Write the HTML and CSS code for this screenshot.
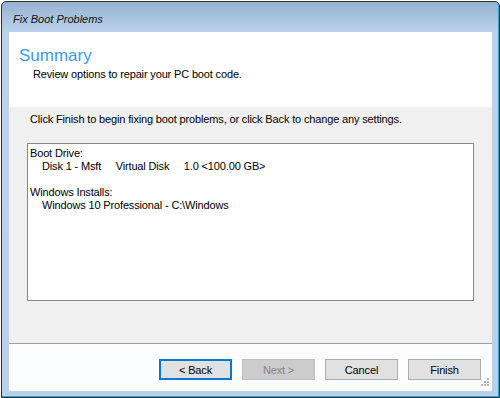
FILE: index.html
```html
<!DOCTYPE html>
<html lang="en">
<head>
  <meta charset="UTF-8">
  <title>Fix Boot Problems</title>
  <link rel="stylesheet" href="styles.css">
</head>
<body>
  <div class="window">
    <div class="titlebar">Fix Boot Problems</div>

    <div class="client">
      <div class="header">
        <div class="heading">Summary</div>
        <div class="subheading">Review options to repair your PC boot code.</div>
      </div>

      <div class="content">
        <p class="intro">Click Finish to begin fixing boot problems, or click Back to change any settings.</p>
        <div class="listbox">
          <div class="line">Boot Drive:</div>
          <div class="line indent">Disk 1 - Msft&nbsp;&nbsp;&nbsp;&nbsp;&nbsp;Virtual Disk&nbsp;&nbsp;&nbsp;&nbsp;&nbsp;1.0 &lt;100.00 GB&gt;</div>
          <div class="line">&nbsp;</div>
          <div class="line">Windows Installs:</div>
          <div class="line indent">Windows 10 Professional - C:\Windows</div>
        </div>
      </div>

      <div class="footer">
        <button class="btn focused">&lt; Back</button>
        <button class="btn" disabled>Next &gt;</button>
        <button class="btn">Cancel</button>
        <button class="btn">Finish</button>
        <svg class="grip" width="10" height="10" viewBox="0 0 10 10">
          <rect x="7" y="1" width="2" height="2" fill="#b8b8b8"/>
          <rect x="4" y="4" width="2" height="2" fill="#b8b8b8"/>
          <rect x="7" y="4" width="2" height="2" fill="#b8b8b8"/>
          <rect x="1" y="7" width="2" height="2" fill="#b8b8b8"/>
          <rect x="4" y="7" width="2" height="2" fill="#b8b8b8"/>
          <rect x="7" y="7" width="2" height="2" fill="#b8b8b8"/>
        </svg>
      </div>
    </div>
  </div>
</body>
</html>
```

FILE: styles.css
```css
body{
  margin: 0;
  padding: 0;
  background-color: white;
  font-family: "Liberation Sans", Arial, sans-serif;
  font-size: 11px;
  letter-spacing: -0.15px;
  color: black;
}
.window{
  box-sizing: border-box;
  width: 499px;
  height: 397px;
  margin: 1px 0 0 1px;
  border: 1px solid #2e2e2e;
  border-radius: 5px 5px 0 0;
  padding: 0 7px 6px 7px;
  background: linear-gradient(#96b2d1, #bbd3ec 30px, #b9d1ea);
  box-shadow: inset -1px -1px 0 #2aa9dc;
  display: flex;
  flex-direction: column;
}
.titlebar{
  height: 30px;
  line-height: 34px;
  padding-left: 4px;
  font-size: 11px;
  letter-spacing: 0;
  font-style: italic;
  color: #111;
}
.client{
  flex: 1;
  display: flex;
  flex-direction: column;
  background-color: #f0f0f0;
}
.header{
  height: 75px;
  background-color: white;
  padding-left: 10px;
}
.heading{
  font-size: 17px;
  letter-spacing: 0;
  color: #3d9ae8;
  padding-top: 13px;
  line-height: 22px;
}
.subheading{
  padding-left: 14px;
  line-height: 14px;
}
.content{
  flex: 1;
  padding: 5px 18px 0 18px;
}
.intro{
  margin: 0 0 17px 3px;
  line-height: 14px;
}
.listbox{
  box-sizing: border-box;
  height: 158px;
  background-color: white;
  border: 1px solid #828790;
  padding: 3px 2px;
}
.line{
  height: 13px;
  line-height: 13px;
}
.indent{
  padding-left: 12px;
}
.footer{
  position: relative;
  height: 48px;
  border-top: 1px solid #a0a0a0;
  background-color: #fbfcfd;
  display: flex;
  gap: 10px;
  padding: 15px 0 0 150px;
  box-sizing: border-box;
}
.btn{
  box-sizing: border-box;
  width: 73px;
  height: 21px;
  padding: 0;
  font-family: "Liberation Sans", Arial, sans-serif;
  font-size: 11px;
  letter-spacing: -0.15px;
  color: black;
  background-color: #e1e1e1;
  border: 1px solid #adadad;
  border-radius: 0;
}
.btn.focused{
  border: 2px solid #0078d7;
}
.btn:disabled{
  background-color: #cccccc;
  border-color: #bfbfbf;
  color: #838383;
}
.grip{
  position: absolute;
  right: 2px;
  bottom: 4px;
}
```
